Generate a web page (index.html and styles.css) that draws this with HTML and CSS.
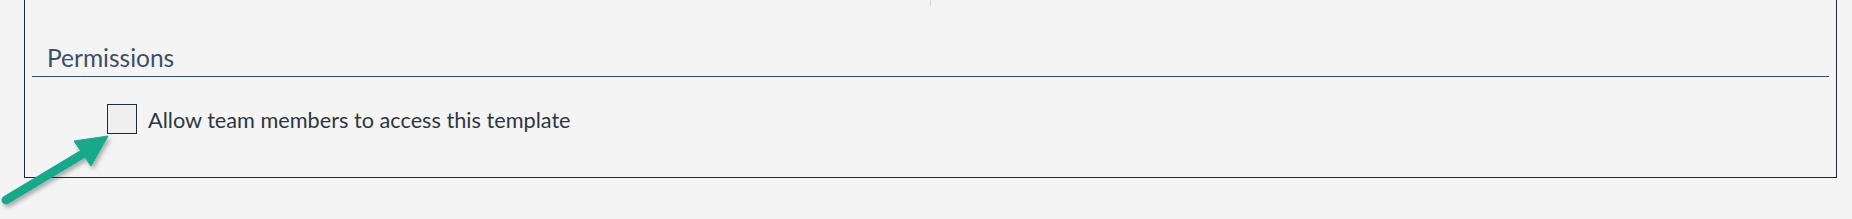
FILE: index.html
```html
<!DOCTYPE html>
<html>
<head>
    <title>Template settings</title>
    <link rel="stylesheet" href="styles.css">
</head>
<body>
    <div class="page">
        <div class="panel">
            <div class="columns">
                <div class="column"></div>
                <div class="column column-right"></div>
            </div>

            <h2 class="section-title">Permissions</h2>

            <label class="check-row">
                <input type="checkbox" class="check">
                <span class="check-label">Allow team members to access this template</span>
            </label>
        </div>
    </div>

    <!-- annotation arrow -->
    <svg class="arrow" width="130" height="89" viewBox="0 130 130 89">
        <defs>
            <filter id="shadow" x="-20%" y="-20%" width="140%" height="140%">
                <feDropShadow dx="2" dy="3" stdDeviation="2" flood-color="#000" flood-opacity="0.3"/>
            </filter>
        </defs>
        <g filter="url(#shadow)" fill="#17aa8a" stroke="#17aa8a">
            <line x1="6" y1="200" x2="86" y2="152" stroke-width="9" stroke-linecap="round"/>
            <polygon points="108,136 74,141 91,166" stroke-width="1" stroke-linejoin="round"/>
        </g>
    </svg>
</body>
</html>
```

FILE: styles.css
```css
body {
    margin: 0;
    background-color: #f4f4f4;
    font-family: Lato, "Liberation Sans", sans-serif;
    height: 219px;
    overflow: hidden;
}

.page {
    padding: 0 15px 0 24px;
}

.panel {
    border: 1px solid #1e2a36;
    border-top: none;
    padding-bottom: 43px;
}

.columns {
    display: flex;
    height: 6px;
}

.column {
    flex: 1;
}

.column-right {
    border-left: 1px solid #d6d6d6;
}

.section-title {
    margin: 37px 7px 0 7px;
    padding: 0 0 3px 15px;
    font-size: 24.5px;
    font-weight: normal;
    line-height: 30px;
    color: #3a5068;
    border-bottom: 1px solid #34506e;
}

.check-row {
    display: flex;
    align-items: center;
    margin: 27px 0 0 82px;
    cursor: pointer;
}

.check {
    appearance: none;
    width: 30px;
    height: 30px;
    margin: 0 11px 0 0;
    border: 1px solid #1f2a36;
    background-color: #efefef;
    box-sizing: border-box;
}

.check-label {
    font-size: 21.7px;
    line-height: 28px;
    padding-top: 2px;
    color: #2c3643;
}

.arrow {
    position: absolute;
    left: 0;
    top: 130px;
}
```
